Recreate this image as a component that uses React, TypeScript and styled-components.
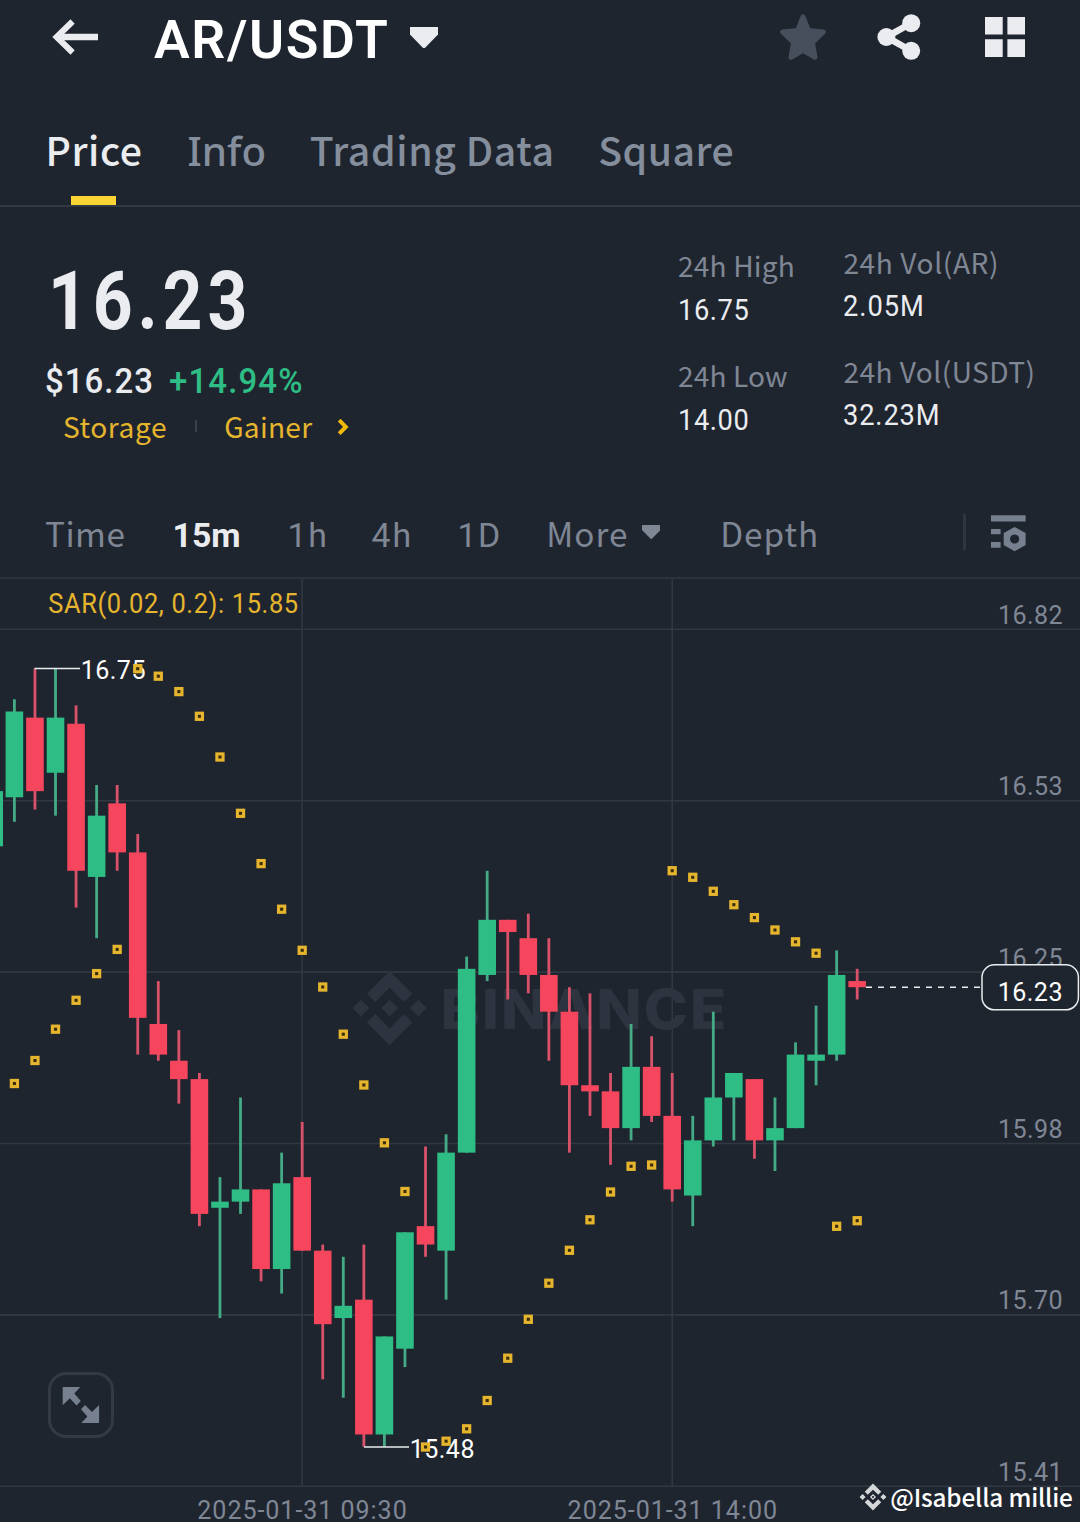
import React from "react";
import styled, { createGlobalStyle } from "styled-components";

const color = {
  bg: "#1f252f",
  line: "#323942",
  grid: "#313841",
  text: "#eaecef",
  muted: "#848e9c",
  dim: "#7f8795",
  green: "#2ebd85",
  greenWick: "#45ab86",
  red: "#f6465d",
  redWick: "#d9526a",
  yellow: "#e6b52e",
  accent: "#fcd535",
  ghost: "#2e343f",
};

const LABEL = '"Noto Sans CJK SC", "Noto Sans", sans-serif';
const SERIFED = '"Noto Sans", sans-serif';
const NUMERIC = 'Roboto, "Liberation Sans", sans-serif';

const GlobalStyle = createGlobalStyle`
  * { box-sizing: border-box; }
  body { margin: 0; background: ${color.bg}; color: ${color.text}; font-family: ${LABEL}; }
  svg { display: block; flex: none; }
`;

const Screen = styled.main`
  width: 1080px;
  height: 1522px;
  overflow: hidden;
  display: flex;
  flex-direction: column;
  background: ${color.bg};
`;

/* ---------- header ---------- */

const Header = styled.header`
  height: 74px;
  padding: 0 54px 0 52px;
  display: flex;
  align-items: center;
`;

const Pair = styled.h1`
  margin: 0 0 0 55px;
  padding-top: 5px;
  font: 600 53.5px/74px ${NUMERIC};
  letter-spacing: 1.65px;
  color: #fff;
  white-space: nowrap;
`;

const PairCaret = styled.span`
  margin-left: 20.6px;
`;

const Actions = styled.div`
  margin-left: auto;
  display: flex;
  align-items: center;
`;

const ActionIcon = styled.span<{ $gap?: number }>`
  margin-left: ${(p) => p.$gap ?? 0}px;
`;

/* ---------- page tabs ---------- */

const Tabs = styled.nav`
  height: 133px;
  padding: 46px 0 0 45.4px;
  border-bottom: 2px solid ${color.line};
  display: grid;
  grid-template-columns: 142.2px 122.2px 288.5px auto;
  justify-content: start;
  justify-items: start;
`;

const Tab = styled.div<{ $active?: boolean; $track: number; $serifed?: boolean }>`
  display: flex;
  flex-direction: column;
  align-items: center;
  gap: 18px;
  padding-top: ${(p) => (p.$serifed ? 1.5 : 0)}px;
  font-family: ${(p) => (p.$serifed ? SERIFED : LABEL)};
  font-size: ${(p) => (p.$serifed ? 40.3 : 39.2)}px;
  font-weight: 500;
  line-height: 58px;
  letter-spacing: ${(p) => p.$track}px;
  color: ${(p) => (p.$active ? color.text : color.muted)};
  white-space: nowrap;
`;

const TabBar = styled.span`
  width: 45px;
  height: 9px;
  background: ${color.accent};
`;

/* ---------- price summary ---------- */

const Summary = styled.section`
  height: 289px;
  display: grid;
  grid-template-columns: 632.8px 165.3px auto;
  justify-content: start;
  padding-left: 45.3px;
`;

/* Figures are drawn slightly condensed with open tracking. */
const Figure = styled.span<{ $squeeze?: number; $track: number }>`
  display: inline-block;
  transform: scaleX(${(p) => p.$squeeze ?? 0.95});
  transform-origin: 0 50%;
  letter-spacing: ${(p) => p.$track}px;
  white-space: nowrap;
`;

const PriceColumn = styled.div`
  padding-top: 46px;
`;

const LastPrice = styled.div`
  padding-left: 2.5px;
  font: 700 81.9px/96px ${NUMERIC};
`;

const FiatRow = styled.div`
  margin-top: 12px;
  display: grid;
  grid-template-columns: 123.5px auto;
  justify-content: start;
  font: 500 34.7px/40px ${NUMERIC};
`;

const Change = styled(Figure)`
  color: ${color.green};
`;

const TagRow = styled.div`
  margin-top: 7px;
  padding-left: 17.6px;
  display: flex;
  align-items: center;
  font: 400 28.1px/36px ${LABEL};
  color: ${color.yellow};
`;

const Tag = styled.span<{ $track: number; $width: number }>`
  width: ${(p) => p.$width}px;
  letter-spacing: ${(p) => p.$track}px;
`;

const TagDivider = styled.span`
  width: 2px;
  height: 12px;
  margin: 0 27.2px 0 0;
  background: #3a414c;
`;

const TagChevron = styled.span`
  padding-top: 2px;
`;

const StatColumn = styled.div<{ $top: number }>`
  padding-top: ${(p) => p.$top}px;
  display: flex;
  flex-direction: column;
  gap: 29px;
`;

const Stat = styled.div<{ $gap?: number }>`
  display: flex;
  flex-direction: column;
  gap: ${(p) => p.$gap ?? 9}px;
  white-space: nowrap;
`;

const StatLabel = styled.span<{ $track: number }>`
  font: 400 28.1px/36px ${LABEL};
  letter-spacing: ${(p) => p.$track}px;
  color: ${color.dim};
`;

const StatValue = styled(Figure)`
  font: 400 28.7px/36px ${NUMERIC};
`;

/* ---------- interval bar ---------- */

const IntervalBar = styled.div`
  height: 83px;
  border-bottom: 2px solid #2b323d;
  display: flex;
  justify-content: space-between;
`;

const Intervals = styled.div`
  padding: 16.5px 0 0 45px;
  display: grid;
  grid-template-columns: 127.6px 115px 84px 86px 88.6px 174px auto;
  align-items: baseline;
`;

const Interval = styled.span<{ $track: number; $numeric?: boolean; $active?: boolean }>`
  display: flex;
  align-items: center;
  font-family: ${(p) => (p.$numeric ? NUMERIC : LABEL)};
  font-size: ${(p) => (p.$numeric ? 33.8 : 33.3)}px;
  font-weight: ${(p) => (p.$active ? 700 : 400)};
  line-height: 40px;
  letter-spacing: ${(p) => p.$track}px;
  color: ${(p) => (p.$active ? color.text : color.dim)};
`;

const IntervalCaret = styled.span`
  margin: 0 0 2px 13.5px;
`;

const ChartTools = styled.div`
  padding: 18px 54px 0 0;
  display: flex;
  align-items: flex-start;
  gap: 25px;
`;

const ToolDivider = styled.span`
  width: 3px;
  height: 36px;
  background: #2f3640;
`;

const ToolIcon = styled.span`
  padding-top: 1px;
`;

/* ---------- chart ---------- */

const ChartPanel = styled.section`
  position: relative;
  height: 943px;
`;

const ExpandButton = styled.button`
  position: absolute;
  left: 48px;
  top: 793px;
  width: 66px;
  height: 66px;
  padding: 0;
  display: grid;
  place-items: center;
  border: 3px solid #333a45;
  border-radius: 18px;
  background: transparent;
`;

const Signature = styled.div`
  position: absolute;
  left: 859px;
  top: 900px;
  display: flex;
  align-items: center;
  gap: 3.2px;
  font: 500 24.3px/36px ${LABEL};
  letter-spacing: -0.15px;
  color: #fff;
  white-space: nowrap;
`;

const BINANCE_MARK =
  "M16.624 13.92l2.718 2.716-7.353 7.353-7.353-7.352 2.717-2.717 4.636 4.66 4.635-4.66zm4.637-4.636L24 12l-2.715 2.716L18.568 12l2.693-2.716zm-9.272.001l2.716 2.692-2.717 2.717L9.272 12l2.716-2.715zm-9.272-.001L5.409 12l-2.692 2.692L0 12l2.717-2.716zM11.989.012l7.353 7.329-2.718 2.715-4.635-4.636-4.636 4.66-2.717-2.716L11.989.012z";

function BackIcon() {
  return (
    <svg width="47" height="38" viewBox="52 18 47 38" fill="none" stroke={color.text}>
      <path d="M72.6 21.5L56.6 37l16 15.5" strokeWidth="6" />
      <path d="M57 37h41" strokeWidth="6.6" />
    </svg>
  );
}

function CaretIcon({ width, height, fill }: { width: number; height: number; fill: string }) {
  return (
    <svg width={width} height={height} viewBox="0 0 28 21" preserveAspectRatio="none" fill={fill}>
      <path d="M0 0H28V7.6L15.4 20.4Q14 21.6 12.6 20.4L0 7.6Z" />
    </svg>
  );
}

function StarIcon() {
  return (
    <svg width="46" height="48" viewBox="780 14 46 48" fill="#474f5d" stroke="#474f5d" strokeWidth="5" strokeLinejoin="round">
      <path d="M803 17.8L808.4 31.4 823.3 33 812.4 43.4 815 58.3 803 51.4 791 58.3 793.6 43.4 782.7 33 797.6 31.4Z" />
    </svg>
  );
}

function ShareIcon() {
  return (
    <svg width="44" height="46" viewBox="877 14 44 46" fill={color.text}>
      <path d="M911.2 23.2L886.4 37l24.8 13.8" fill="none" stroke={color.text} strokeWidth="6.6" />
      <circle cx="911.2" cy="23.2" r="9" />
      <circle cx="886.4" cy="37" r="9" />
      <circle cx="911.2" cy="50.8" r="9" />
    </svg>
  );
}

function GridIcon() {
  return (
    <svg width="42" height="40" viewBox="984 17 42 40" fill={color.text}>
      <path d="M985 17h17.7v17.5H985zM1007.4 17h17.6v17.5h-17.6zM985 39.3h17.7V57H985zM1007.4 39.3h17.6V57h-17.6z" />
    </svg>
  );
}

function ChevronIcon() {
  return (
    <svg width="13" height="20" viewBox="337 417.5 13 20" fill="none" stroke="#f0b90b" strokeWidth="4">
      <path d="M339.2 420.6l6.6 6.8-6.6 6.8" />
    </svg>
  );
}

function ChartSettingsIcon() {
  return (
    <svg width="35" height="37" viewBox="991 515 35 37" fill="#76808f">
      <path d="M991 515.3h34.6v6.2H991zM991 529h9.6v5.2H991zM991 542h9.6v5.8H991z" />
      <path
        fillRule="evenodd"
        d="M1014.6 527l11 6v12l-11 6.2-10.9-6.2v-12zM1014.6 534.4a4.6 4.6 0 1 0 .01 0z"
      />
    </svg>
  );
}

function ExpandIcon() {
  return (
    <svg width="38" height="38" viewBox="62 1386 38 38" fill="#76808f">
      <path d="M62.7 1387H80.2L74.3 1393.5 80.8 1400.9 76.6 1405.4 69.8 1398.2 62.7 1405.2Z" />
      <path d="M99.1 1423H81.2L87.4 1416.5 81 1409.3 85 1404.9 92 1412 99.1 1405Z" />
    </svg>
  );
}

/* Candles are stored as [up, high, top, bottom, low], counted in cents below the 16.75 session high. */
type Candle = [0 | 1, number, number, number, number];

const candles: Candle[] = [
  [1, 5, 7, 21, 25], [0, 0, 8, 20, 23], [1, 0, 8, 17, 24], [0, 6, 9, 33, 39], [1, 19, 24, 34, 44],
  [0, 19, 22, 30, 33], [0, 27, 30, 57, 63], [0, 51, 58, 63, 64], [0, 59, 64, 67, 71], [0, 66, 67, 89, 91],
  [1, 83, 87, 88, 106], [1, 70, 85, 87, 89], [0, 85, 85, 98, 100], [1, 79, 84, 98, 102], [0, 74, 83, 95, 95],
  [0, 94, 95, 107, 116], [1, 96, 104, 106, 119], [0, 94, 103, 125, 127], [1, 109, 109, 125, 127], [1, 92, 92, 111, 114],
  [0, 78, 91, 94, 96], [1, 76, 79, 95, 103], [1, 47, 49, 79, 79], [1, 33, 41, 50, 51], [0, 41, 41, 43, 54],
  [0, 40, 44, 50, 53], [0, 44, 50, 56, 64], [0, 52, 56, 68, 79], [0, 53, 68, 69, 73], [0, 66, 69, 75, 81],
  [1, 58, 65, 75, 77], [0, 60, 65, 73, 74], [0, 66, 73, 85, 87], [1, 73, 77, 86, 91], [1, 56, 70, 77, 78],
  [1, 66, 66, 70, 77], [0, 67, 67, 77, 80], [1, 70, 75, 77, 82], [1, 61, 63, 75, 75], [1, 55, 63, 64, 68],
  [1, 46, 50, 63, 64], [0, 49, 51, 52, 54],
];

const sar = [
  1083.5, 1060.5, 1029.2, 1000.3, 973.6, 949.4, 668.7, 676.2, 691.6, 716.3, 757, 813.3, 863.6, 909.2, 950.3, 987,
  1034.2, 1085, 1142.8, 1191.5, 1447, 1441.2, 1428.8, 1400.5, 1358.2, 1319.3, 1283.2, 1250.3, 1219.8, 1192, 1166.3,
  1165, 870.7, 877.3, 891.3, 904.7, 917.6, 930, 941.8, 953.2, 1226.3, 1220.7,
];

const priceTicks = ["16.82", "16.53", "16.25", "15.98", "15.70", "15.41"];

const xOf = (i: number) => 14.4 + i * 20.556;
const yOf = (cents: number) => 668.6 + cents * 6.127;
const tickY = (i: number) => 629.3 + i * 171.4;

type ChartTextProps = { x: number; y: number; track?: number; size?: number; fill: string; children: string };

function ChartText({ x, y, track = 0.45, size = 26.4, fill, children }: ChartTextProps) {
  return (
    <text transform={`translate(${x} ${y}) scale(0.95 1)`} fontSize={size} letterSpacing={track} fill={fill}>
      {children}
    </text>
  );
}

function Chart() {
  return (
    <svg width="1080" height="943" viewBox="0 579 1080 943" fontFamily={NUMERIC}>
      <g stroke={color.grid} strokeWidth="1.6">
        {priceTicks.map((t, i) => (
          <line key={t} x1="0" x2="1080" y1={tickY(i)} y2={tickY(i)} />
        ))}
        <line x1="302.1" x2="302.1" y1="579" y2="1486" />
        <line x1="672.2" x2="672.2" y1="579" y2="1486" />
      </g>

      <g fill={color.ghost}>
        <path d={BINANCE_MARK} transform="translate(352.6 971) scale(3.09)" />
        <text
          transform="translate(440.5 1028.6) scale(1.07 1)"
          fontFamily="Inter, sans-serif"
          fontWeight="800"
          fontSize="55.5"
          letterSpacing="1.9"
        >
          BINANCE
        </text>
      </g>

      {priceTicks.map((t, i) => (
        <ChartText key={t} x={998} y={tickY(i) - 5.5} fill={color.dim}>{t}</ChartText>
      ))}
      <ChartText x={197.3} y={1518.8} track={1} fill={color.dim}>2025-01-31 09:30</ChartText>
      <ChartText x={567.6} y={1518.8} track={1} fill={color.dim}>2025-01-31 14:00</ChartText>
      <ChartText x={48.2} y={613.3} track={0.65} size={26.8} fill={color.yellow}>SAR(0.02, 0.2): 15.85</ChartText>

      <rect x="0" y={yOf(20)} width="3" height={yOf(29) - yOf(20)} fill={color.green} />
      {candles.map(([up, high, top, bottom, low], i) => (
        <g key={i}>
          <rect x={xOf(i) - 1.4} y={yOf(high)} width="2.8" height={yOf(low) - yOf(high)} fill={up ? color.greenWick : color.redWick} />
          <rect x={xOf(i) - 8.8} y={yOf(top)} width="17.6" height={yOf(bottom) - yOf(top)} fill={up ? color.green : color.red} />
        </g>
      ))}

      <g stroke={color.text} strokeWidth="1.5">
        <line x1="34.5" x2="80" y1="668.5" y2="668.5" />
        <line x1="364" x2="409" y1="1447" y2="1447" />
        <line x1="866" x2="981" y1="987.2" y2="987.2" strokeDasharray="6 6" />
      </g>
      <ChartText x={80.8} y={679} fill="#fff">16.75</ChartText>
      <ChartText x={409.8} y={1458} fill="#fff">15.48</ChartText>

      <g fill="#3a2c10" stroke={color.yellow} strokeWidth="3.1">
        {sar.map((y, i) => (
          <rect key={i} x={xOf(i) - 3.1} y={y - 3.1} width="6.2" height="6.2" />
        ))}
      </g>

      <rect x="982" y="964.8" width="96.4" height="45" rx="12.5" fill={color.bg} stroke={color.text} strokeWidth="1.5" />
      <ChartText x={997.8} y={1001} fill="#fff">16.23</ChartText>
    </svg>
  );
}

export default function App() {
  return (
    <>
      <GlobalStyle />
      <Screen>
        <Header>
          <BackIcon />
          <Pair>AR/USDT</Pair>
          <PairCaret>
            <CaretIcon width={28} height={21} fill={color.text} />
          </PairCaret>
          <Actions>
            <ActionIcon><StarIcon /></ActionIcon>
            <ActionIcon $gap={51}><ShareIcon /></ActionIcon>
            <ActionIcon $gap={63}><GridIcon /></ActionIcon>
          </Actions>
        </Header>

        <Tabs>
          <Tab $active $track={0.6}>
            Price
            <TabBar />
          </Tab>
          <Tab $serifed $track={0}>Info</Tab>
          <Tab $track={0.6}>Trading Data</Tab>
          <Tab $track={0.45}>Square</Tab>
        </Tabs>

        <Summary>
          <PriceColumn>
            <LastPrice>
              <Figure $squeeze={0.85} $track={5.7}>16.23</Figure>
            </LastPrice>
            <FiatRow>
              <Figure $track={1.1}>$16.23</Figure>
              <Change $track={1.2}>+14.94%</Change>
            </FiatRow>
            <TagRow>
              <Tag $track={0.6} $width={132.1}>Storage</Tag>
              <TagDivider />
              <Tag $track={0.28} $width={112.7}>Gainer</Tag>
              <TagChevron><ChevronIcon /></TagChevron>
            </TagRow>
          </PriceColumn>
          <StatColumn $top={40}>
            <Stat>
              <StatLabel $track={0.15}>24h High</StatLabel>
              <StatValue $track={0.6}>16.75</StatValue>
            </Stat>
            <Stat>
              <StatLabel $track={0.1}>24h Low</StatLabel>
              <StatValue $track={0.6}>14.00</StatValue>
            </Stat>
          </StatColumn>
          <StatColumn $top={36.6}>
            <Stat $gap={8.2}>
              <StatLabel $track={0.6}>24h Vol(AR)</StatLabel>
              <StatValue $track={1}>2.05M</StatValue>
            </Stat>
            <Stat $gap={8.6}>
              <StatLabel $track={0.45}>24h Vol(USDT)</StatLabel>
              <StatValue $track={0.9}>32.23M</StatValue>
            </Stat>
          </StatColumn>
        </Summary>

        <IntervalBar>
          <Intervals>
            <Interval $track={0.5}>Time</Interval>
            <Interval $track={0} $numeric $active>15m</Interval>
            <Interval $track={1.7} $numeric>1h</Interval>
            <Interval $track={2} $numeric>4h</Interval>
            <Interval $track={1.5} $numeric>1D</Interval>
            <Interval $track={1}>
              More
              <IntervalCaret>
                <CaretIcon width={18.5} height={14} fill={color.dim} />
              </IntervalCaret>
            </Interval>
            <Interval $track={1}>Depth</Interval>
          </Intervals>
          <ChartTools>
            <ToolDivider />
            <ToolIcon><ChartSettingsIcon /></ToolIcon>
          </ChartTools>
        </IntervalBar>

        <ChartPanel>
          <Chart />
          <ExpandButton aria-label="Expand chart">
            <ExpandIcon />
          </ExpandButton>
          <Signature>
            <svg width="28" height="36" viewBox="-0.5 -3.5 25 31" fill="#d4d6d9">
              <path d={BINANCE_MARK} />
              <circle cx="12" cy="12" r="1" fill={color.bg} />
            </svg>
            @Isabella millie
          </Signature>
        </ChartPanel>
      </Screen>
    </>
  );
}
